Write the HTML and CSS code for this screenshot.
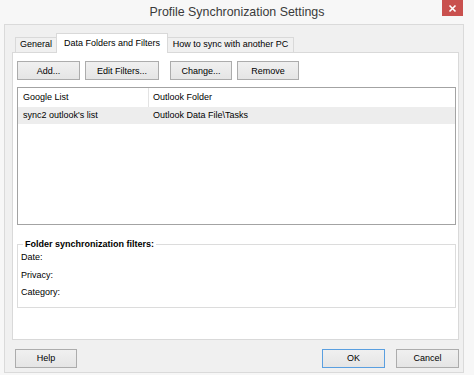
FILE: index.html
```html
<!DOCTYPE html>
<html lang="en">

<head>
    <meta charset="UTF-8">
    <meta name="viewport" content="width=device-width, initial-scale=1.0">
    <title>Profile Synchronization Settings</title>
    <link rel="stylesheet" href="styles.css">
</head>

<body>
    <div class="window">
        <!-- title bar -->
        <div class="titlebar">
            <span></span>
            <h1 class="title">Profile Synchronization Settings</h1>
            <button class="close" aria-label="Close">
                <svg width="9" height="9" viewBox="0 0 9 9">
                    <path d="M1.5 1.5 L7.5 7.5 M7.5 1.5 L1.5 7.5" stroke="#fff" stroke-width="1.6" fill="none" />
                </svg>
            </button>
        </div>

        <div class="client">
            <!-- tabs -->
            <div class="tabs">
                <div class="tab tab-general">General</div>
                <div class="tab tab-folders active">Data Folders and Filters</div>
                <div class="tab tab-howto">How to sync with another PC</div>
            </div>

            <div class="panel">
                <div class="toolbar">
                    <button class="btn btn-add">Add...</button>
                    <button class="btn btn-edit">Edit Filters...</button>
                    <button class="btn btn-change">Change...</button>
                    <button class="btn btn-remove">Remove</button>
                </div>

                <!-- folder list -->
                <div class="listview">
                    <div class="lv-header">
                        <div class="col col-google">Google List</div>
                        <div class="col col-outlook">Outlook Folder</div>
                    </div>
                    <div class="lv-row selected">
                        <div class="col col-google">sync2 outlook's list</div>
                        <div class="col col-outlook">Outlook Data File\Tasks</div>
                    </div>
                </div>

                <fieldset class="filters">
                    <legend>Folder synchronization filters:</legend>
                    <div class="filter-row">Date:</div>
                    <div class="filter-row">Privacy:</div>
                    <div class="filter-row">Category:</div>
                </fieldset>
            </div>

            <div class="footer">
                <button class="btn btn-help">Help</button>
                <span class="spacer"></span>
                <button class="btn btn-ok">OK</button>
                <button class="btn btn-cancel">Cancel</button>
            </div>
        </div>
    </div>
</body>

</html>
```

FILE: styles.css
```css
* {
    box-sizing: border-box;
}

body {
    margin: 0;
    width: 474px;
    height: 375px;
    overflow: hidden;
    background-color: #f7f7f7;
    font-family: "Liberation Sans", Arial, sans-serif;
    font-size: 9px;
    color: #000;
}

/* window frame */
.window {
    width: 474px;
    height: 375px;
}

.titlebar {
    display: grid;
    grid-template-columns: 1fr auto 1fr;
    height: 24px;
}

.title {
    margin: 0;
    font-family: "Liberation Sans", Arial, sans-serif;
    font-weight: normal;
    font-size: 12.4px;
    line-height: 25px;
    color: #3a3a3a;
}

.close {
    justify-self: end;
    align-self: start;
    display: flex;
    align-items: center;
    justify-content: center;
    width: 21px;
    height: 16px;
    margin-right: 11px;
    padding: 0;
    border: none;
    background-color: #c9504e;
}

/* client area */
.client {
    margin: 0 10px 0 4px;
    padding: 8px 4px 4px 7px;
    border: 1px solid #dadada;
    background-color: #f0f0f0;
}

/* tabs */
.tabs {
    position: relative;
    z-index: 1;
    display: flex;
    align-items: flex-end;
    height: 19px;
    margin-left: 3px;
}

.tab {
    height: 15px;
    line-height: 13px;
    text-align: center;
    white-space: nowrap;
    border: 1px solid #d9d9d9;
    border-bottom: none;
    background-color: #f0f0f0;
}

.tab + .tab {
    margin-left: -1px;
}

.tab-general {
    width: 42px;
}

.tab-folders {
    width: 112px;
}

.tab-howto {
    width: 127px;
}

.tab.active {
    height: 20px;
    line-height: 18px;
    margin-bottom: -1px;
    background-color: #fff;
}

/* tab page */
.panel {
    padding: 8px 2px 31px 4px;
    border: 1px solid #d9d9d9;
    background-color: #fff;
}

.btn {
    height: 19px;
    padding: 0;
    font-family: inherit;
    font-size: 9px;
    color: #000;
    border: 1px solid #acacac;
    background: linear-gradient(#f0f0f0, #e5e5e5);
}

.toolbar {
    display: flex;
    gap: 5px;
}

.btn-add {
    width: 63px;
}

.btn-edit {
    width: 74px;
    margin-right: 6px;
}

.btn-change,
.btn-remove {
    width: 62px;
}

.listview {
    height: 138px;
    margin-top: 7px;
    border: 1px solid #a3a3a3;
}

.lv-header,
.lv-row {
    display: flex;
}

.lv-header {
    height: 19px;
    line-height: 19px;
}

.lv-row {
    height: 17px;
    line-height: 17px;
}

.lv-row.selected {
    background-color: #ededed;
}

.col {
    padding-left: 4px;
    white-space: nowrap;
}

.col-google {
    width: 131px;
    padding-left: 5px;
}

.lv-header .col-google {
    border-right: 1px solid #e3e3e3;
}

.lv-row .col-google {
    padding-right: 1px;
}

/* group box */
.filters {
    margin: 14px 0 0;
    padding: 0 4px 5px 3px;
    border: 1px solid #dcdcdc;
}

.filters legend {
    margin-left: 2px;
    padding: 0 2px;
    font-weight: bold;
    line-height: 10px;
}

.filter-row {
    line-height: 17.5px;
}

/* dialog buttons */
.footer {
    display: flex;
    margin-top: 9px;
    padding-left: 3px;
}

.spacer {
    flex: 1;
}

.btn-help {
    width: 62px;
}

.btn-ok,
.btn-cancel {
    width: 63px;
}

.btn-ok {
    margin-right: 11px;
    border-color: #5a9fe0;
}
```
